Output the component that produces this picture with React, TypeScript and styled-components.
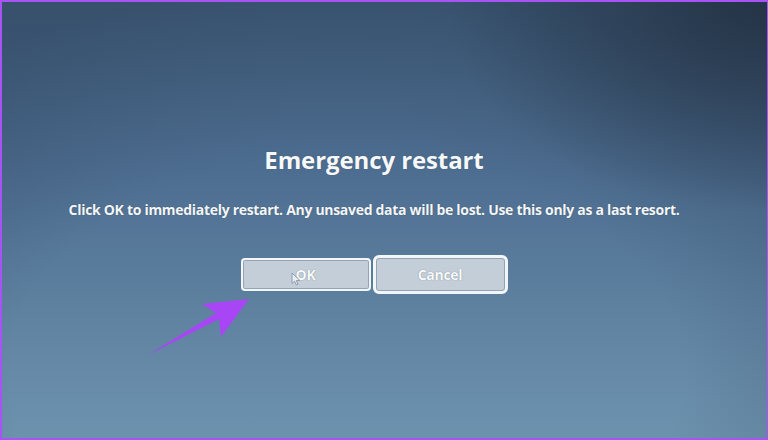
import React from "react";
import styled, { createGlobalStyle } from "styled-components";

const Global = createGlobalStyle`
  html, body { margin: 0; padding: 0; }
  body { width: 768px; height: 440px; overflow: hidden; font-family: "Open Sans", "Liberation Sans", sans-serif; }
`;

const Screen = styled.div`
  position: relative;
  box-sizing: border-box;
  width: 768px;
  height: 440px;
  border: 2px solid #a654f4;
  border-right-width: 1px;
  padding: 142px 21px 0 0;
  display: flex;
  flex-direction: column;
  align-items: center;
  background:
    radial-gradient(ellipse 42% 48% at 100% 0%, rgba(36, 50, 68, 0.95) 0%, rgba(36, 50, 68, 0.5) 45%, rgba(36, 50, 68, 0) 100%),
    radial-gradient(ellipse 80% 90% at 45% 85%, rgba(0, 0, 0, 0) 55%, rgba(30, 45, 66, 0.3) 100%),
    linear-gradient(180deg, #42607f 0%, #4d6d90 38%, #5e81a0 70%, #6d92ae 100%);
  overflow: hidden;
`;

const Title = styled.h1`
  margin: 0;
  font-family: "Open Sans", sans-serif;
  font-weight: 700;
  font-size: 24px;
  line-height: 32px;
  color: #f6f8fa;
  letter-spacing: -0.1px;
  text-shadow: 0 0 1px rgba(40, 55, 75, 0.6);
`;

const Message = styled.p`
  margin: 24px 0 0;
  font-family: "Open Sans", sans-serif;
  font-weight: 700;
  font-size: 14px;
  line-height: 19px;
  color: #f4f6f8;
  letter-spacing: -0.3px;
  white-space: nowrap;
  text-shadow: 0 0 1px rgba(40, 55, 75, 0.7);
`;

const ButtonRow = styled.div`
  margin-top: 36px;
  display: flex;
  align-items: center;
  gap: 2px;
`;

const DialogButton = styled.button<{ $focused?: boolean }>`
  position: relative;
  box-sizing: border-box;
  width: ${(p) => (p.$focused ? 135 : 130)}px;
  height: ${(p) => (p.$focused ? 39 : 33)}px;
  border: ${(p) => (p.$focused ? 3 : 2)}px solid #f3f6f8;
  border-radius: ${(p) => (p.$focused ? 6 : 4)}px;
  background: #c3ced8;
  box-shadow: inset 0 0 0 1px #95a4b3;
  padding: 0;
  display: flex;
  align-items: center;
  justify-content: center;
  font-family: "Open Sans", sans-serif;
  font-weight: 700;
  font-size: 14px;
  color: #f7f9fb;
  letter-spacing: -0.3px;
  text-shadow: 0 0 1px rgba(90, 105, 120, 0.9);
`;

const Cursor = styled.svg`
  position: absolute;
  left: 48px;
  top: 12px;
`;

const Annotation = styled.svg`
  position: absolute;
  left: 0;
  top: 0;
  pointer-events: none;
`;

export default function App() {
  return (
    <>
      <Global />
      <Screen>
        <Title>Emergency restart</Title>
        <Message>
          Click OK to immediately restart. Any unsaved data will be lost. Use this only as a last resort.
        </Message>
        <ButtonRow>
          <DialogButton>
            <Cursor width="10" height="14" viewBox="0 0 10 14">
              <path d="M1 1 L1 11.5 L3.6 9.2 L5.4 13 L7 12.3 L5.3 8.6 L8.8 8.4 Z" fill="#e9edf1" stroke="#8e9cab" strokeWidth="1" strokeLinejoin="round" />
            </Cursor>
            OK
          </DialogButton>
          <DialogButton $focused>Cancel</DialogButton>
        </ButtonRow>
        <Annotation width="768" height="440" viewBox="0 0 768 440">
          <polygon points="146,353 214,311 200,302 247,297 219,335 217,317" fill="#a846f5" />
        </Annotation>
      </Screen>
    </>
  );
}
